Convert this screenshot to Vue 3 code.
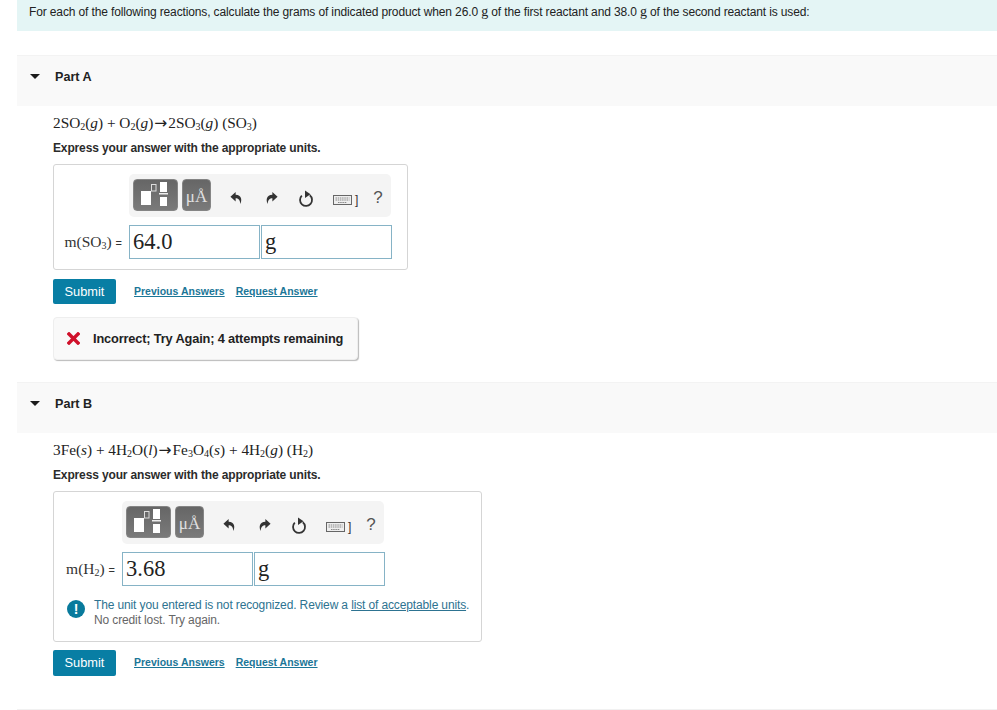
<script setup>
const links = ['Previous Answers', 'Request Answer']
</script>

<template>
  <main class="page">
    <section class="intro">
      For each of the following reactions, calculate the grams of indicated product when 26.0 <span class="serif">g</span> of the first reactant and 38.0 <span class="serif">g</span> of the second reactant is used:
    </section>

    <section class="part part-a">
      <header class="part-head"><i class="caret"></i><strong>Part A</strong></header>
      <div class="part-body">
        <p class="equation">2SO<sub>2</sub>(<em>g</em>) + O<sub>2</sub>(<em>g</em>)<span class="arrow">→</span>2SO<sub>3</sub>(<em>g</em>) (SO<sub>3</sub>)</p>
        <p class="express">Express your answer with the appropriate units.</p>
        <div class="answer answer-a">
          <div class="tools">
            <div class="tool-btn templates">
              <svg width="29" height="24" viewBox="0 0 29 24"><rect x="1" y="9" width="10" height="14" fill="#fff"/><rect x="11.500" y="2.500" width="4.500" height="6.500" fill="none" stroke="#ddd"/><rect x="20" y="0" width="7" height="10" fill="#fff"/><rect x="19" y="11" width="9" height="1.500" fill="#eee"/><rect x="20" y="15" width="7" height="9" fill="#fff"/></svg>
            </div>
            <div class="tool-btn units"><span>μÅ</span></div>
            <svg class="ico first" width="13" height="14" viewBox="0 0 15 16"><path d="M6.500 1 .5 6.500 6.500 12V8.300c3 0 5 1.500 5.500 6.700 2-5 1.500-10.500-5.500-10.800z" fill="#333"/></svg>
            <svg class="ico redo" width="13" height="14" viewBox="0 0 15 16"><path d="M8.500 1l6 5.500-6 5.500V8.300c-3 0-5 1.500-5.500 6.700C1 10 1.500 4.500 8.500 4.200z" fill="#333"/></svg>
            <svg class="ico reset" width="16" height="18" viewBox="0 0 16 18"><path d="M11.800 5.300A6 6 0 1 1 3.800 5.700" fill="none" stroke="#333" stroke-width="1.800"/><path d="M7 .5 12.500 4.300 7 8z" fill="#333"/></svg>
            <span class="kbd"><svg width="19" height="10" viewBox="0 0 19 10"><rect x=".5" y=".5" width="18" height="9" fill="#eee" stroke="#666"/><path d="M2.500 3h14M2.500 5h14M5 7.500h9" stroke="#888" stroke-width="1.100" stroke-dasharray="1.500 .7"/></svg><b>]</b></span>
            <span class="help">?</span>
          </div>
          <div class="entry">
            <span class="math-label">m(SO<sub>3</sub>) <small>=</small></span>
            <div class="field">64.0</div>
            <div class="field">g</div>
          </div>
        </div>
        <div class="actions">
          <button class="submit" type="button">Submit</button>
          <a v-for="link in links" :key="link" class="action-link">{{ link }}</a>
        </div>
        <div class="incorrect">
          <svg width="13" height="13" viewBox="0 0 13 13"><path d="M2 2l9 9M11 2l-9 9" stroke="#d0112b" stroke-width="3.400" stroke-linecap="square"/></svg>
          <span>Incorrect; Try Again; 4 attempts remaining</span>
        </div>
      </div>
    </section>

    <section class="part part-b">
      <header class="part-head"><i class="caret"></i><strong>Part B</strong></header>
      <div class="part-body">
        <p class="equation">3Fe(<em>s</em>) + 4H<sub>2</sub>O(<em>l</em>)<span class="arrow">→</span>Fe<sub>3</sub>O<sub>4</sub>(<em>s</em>) + 4H<sub>2</sub>(<em>g</em>) (H<sub>2</sub>)</p>
        <p class="express">Express your answer with the appropriate units.</p>
        <div class="answer answer-b">
          <div class="tools">
            <div class="tool-btn templates">
              <svg width="29" height="24" viewBox="0 0 29 24"><rect x="1" y="9" width="10" height="14" fill="#fff"/><rect x="11.500" y="2.500" width="4.500" height="6.500" fill="none" stroke="#ddd"/><rect x="20" y="0" width="7" height="10" fill="#fff"/><rect x="19" y="11" width="9" height="1.500" fill="#eee"/><rect x="20" y="15" width="7" height="9" fill="#fff"/></svg>
            </div>
            <div class="tool-btn units"><span>μÅ</span></div>
            <svg class="ico first" width="13" height="14" viewBox="0 0 15 16"><path d="M6.500 1 .5 6.500 6.500 12V8.300c3 0 5 1.500 5.500 6.700 2-5 1.500-10.500-5.500-10.800z" fill="#333"/></svg>
            <svg class="ico redo" width="13" height="14" viewBox="0 0 15 16"><path d="M8.500 1l6 5.500-6 5.500V8.300c-3 0-5 1.500-5.500 6.700C1 10 1.500 4.500 8.500 4.200z" fill="#333"/></svg>
            <svg class="ico reset" width="16" height="18" viewBox="0 0 16 18"><path d="M11.800 5.300A6 6 0 1 1 3.800 5.700" fill="none" stroke="#333" stroke-width="1.800"/><path d="M7 .5 12.500 4.300 7 8z" fill="#333"/></svg>
            <span class="kbd"><svg width="19" height="10" viewBox="0 0 19 10"><rect x=".5" y=".5" width="18" height="9" fill="#eee" stroke="#666"/><path d="M2.500 3h14M2.500 5h14M5 7.500h9" stroke="#888" stroke-width="1.100" stroke-dasharray="1.500 .7"/></svg><b>]</b></span>
            <span class="help">?</span>
          </div>
          <div class="entry">
            <span class="math-label">m(H<sub>2</sub>) <small>=</small></span>
            <div class="field">3.68</div>
            <div class="field">g</div>
          </div>
          <div class="note">
            <span class="bang">!</span>
            <p><span class="note-blue">The unit you entered is not recognized. Review a <u>list of acceptable units</u>.</span><br>No credit lost. Try again.</p>
          </div>
        </div>
        <div class="actions">
          <button class="submit" type="button">Submit</button>
          <a v-for="link in links" :key="link" class="action-link">{{ link }}</a>
        </div>
      </div>
    </section>
    <div class="end-rule"></div>
  </main>
</template>

<style scoped>
.page {
  width: 997px;
  height: 710px;
  overflow: hidden;
  box-sizing: border-box;
  padding-left: 17px;
  background: #fff;
  color: #222;
  font-family: "Liberation Sans", Arial, sans-serif;
  font-size: 13px;
}
.intro {
  height: 31px;
  box-sizing: border-box;
  padding: 3px 0 0 12px;
  background: #e4f5f5;
  font-size: 12px;
  letter-spacing: -0.13px;
  line-height: 17px;
  white-space: nowrap;
}
.serif { font-family: "Liberation Serif", serif; font-size: 14px; }
.part-head {
  height: 51px;
  box-sizing: border-box;
  display: flex;
  align-items: flex-start;
  padding: 14px 0 0 13px;
  background: #f9f9f9;
  border-top: 1px solid #f3f3f3;
  line-height: 15px;
  color: #222;
}
.part-a { margin-top: 24px; }
.part-b { margin-top: 22px; }
.part-head strong { margin-left: 15px; font-size: 12.600px; }
.caret {
  margin-top: 4px;
  width: 0;
  height: 0;
  border-left: 5px solid transparent;
  border-right: 5px solid transparent;
  border-top: 5px solid #1c1c1c;
}
.part-body { padding-left: 36px; }
.equation {
  margin: 0;
  padding-top: 7px;
  height: 27px;
  font-family: "Liberation Serif", serif;
  font-size: 15.300px;
  line-height: 19px;
  color: #222;
  white-space: nowrap;
}
.equation sub, .math-label sub { font-size: 10px; line-height: 0; vertical-align: -2px; }
.equation em { font-style: italic; }
.arrow { font-family: "DejaVu Sans", sans-serif; font-size: 15.500px; line-height: 0; margin: 0 1px; }
.express {
  margin: 0;
  height: 17px;
  font-size: 12px;
  letter-spacing: -0.14px;
  font-weight: 700;
  line-height: 16px;
  color: #2b2b2b;
}
.answer {
  box-sizing: border-box;
  border: 1px solid #d5d5d5;
  border-radius: 3px;
  position: relative;
}
.answer-a { width: 355px; height: 106px; margin-top: 7px; padding: 9px 0 0 75px; }
.answer-b { width: 429px; height: 151px; margin-top: 7px; padding: 9px 0 0 68px; }
.tools {
  width: 262px;
  height: 43px;
  box-sizing: border-box;
  display: flex;
  align-items: flex-start;
  padding: 5px 0 0 4px;
  background: #f4f4f4;
  border-radius: 5px;
}
.tool-btn {
  height: 32px;
  box-sizing: border-box;
  border-radius: 4px;
  background: linear-gradient(#666, #7a7a7a);
  border: 1px solid #858585;
  display: flex;
  align-items: center;
  justify-content: center;
}
.templates { width: 45px; margin-right: 4px; padding: 0 3px 2px 0; }
.units { width: 29px; padding-top: 3px; color: #e0e0e0; font-family: "Liberation Serif", serif; font-size: 17px; }
.ico { flex: none; margin: 12px 0 0 20px; }
.ico.first { margin-left: 19px; }
.ico.redo { margin-left: 22px; }
.ico.reset { margin: 11px 0 0 20px; }
.kbd { display: flex; align-items: center; margin: 14px 0 0 19px; height: 14px; }
.kbd b { margin-left: 3px; font-weight: 400; font-size: 12px; color: #333; }
.help { margin: 10px 0 0 15px; font-size: 17px; line-height: 18px; color: #555; }
.entry {
  display: flex;
  align-items: center;
  margin-top: 8px;
  position: relative;
}
.math-label {
  position: absolute;
  right: 100%;
  margin-right: 7px;
  white-space: nowrap;
  font-family: "Liberation Serif", serif;
  font-size: 15.500px;
  color: #333;
}
.math-label small { font-family: "Liberation Sans", sans-serif; font-size: 11px; }
.field {
  width: 131px;
  height: 34px;
  box-sizing: border-box;
  border: 1px solid #86b3c6;
  margin-right: 1px;
  padding-left: 3px;
  font-family: "Liberation Serif", serif;
  font-size: 22.500px;
  line-height: 31px;
  color: #222;
}
.note {
  display: flex;
  margin: 12px 0 0 -55px;
}
.note p {
  margin: 0 0 0 9px;
  font-size: 12px;
  letter-spacing: -0.13px;
  line-height: 15px;
  color: #666;
  white-space: nowrap;
}
.note-blue { color: #2d7391; }
.bang {
  flex: none;
  width: 18px;
  height: 18px;
  margin-top: 2px;
  border-radius: 50%;
  background: #087a9c;
  color: #fff;
  font-weight: 700;
  font-size: 14px;
  line-height: 18px;
  text-align: center;
}
.actions {
  display: flex;
  align-items: flex-start;
  margin-top: 9px;
  height: 26px;
}
.part-b .actions { margin-top: 8px; }
.submit {
  flex: none;
  width: 63px;
  height: 25px;
  padding: 0 0 1px;
  border: none;
  border-radius: 2px;
  background: #087ea4;
  color: #fff;
  font-family: "Liberation Sans", sans-serif;
  font-size: 12.800px;
  margin-right: 18px;
}
.part-b .submit { height: 26px; }
.action-link {
  font-size: 10.500px;
  font-weight: 700;
  line-height: 24px;
  color: #1b7697;
  text-decoration: underline;
  margin-right: 11px;
  white-space: nowrap;
}
.incorrect {
  width: 305px;
  height: 43px;
  box-sizing: border-box;
  margin-top: 12px;
  display: flex;
  align-items: center;
  padding-left: 13px;
  background: #f9f9f9;
  border: 1px solid #eee;
  border-radius: 4px;
  box-shadow: 1px 1px 1px #bbb;
  font-size: 12.800px;
  letter-spacing: -0.16px;
  font-weight: 700;
  color: #222;
}
.incorrect svg { flex: none; }
.incorrect span { margin-left: 13px; white-space: nowrap; }
.end-rule { margin-top: 33px; height: 1px; background: #f1f1f1; }
</style>
